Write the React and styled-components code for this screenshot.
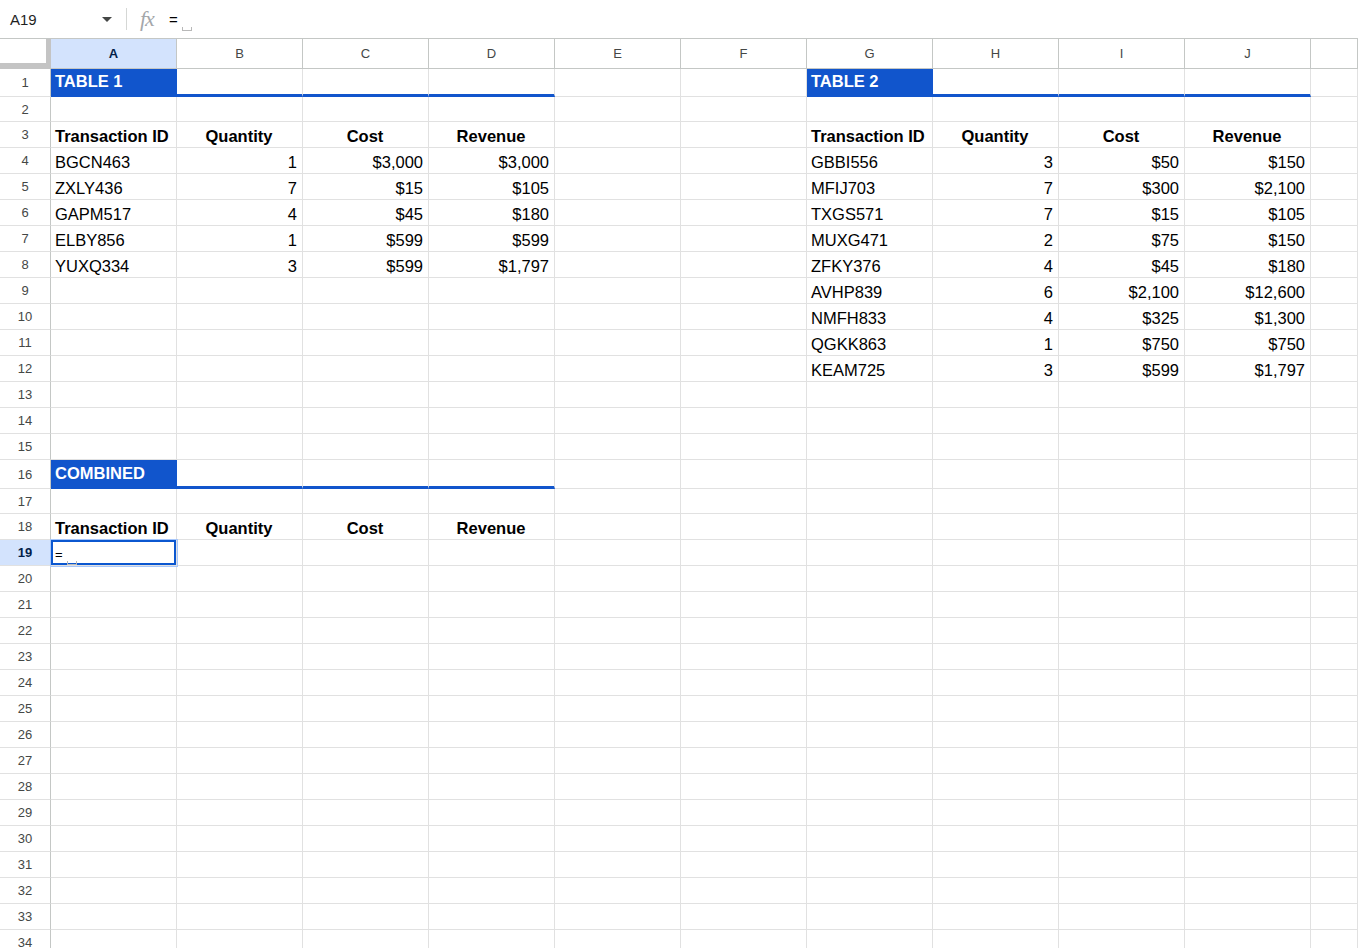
import React from 'react';
import styled, { createGlobalStyle, css } from 'styled-components';

const GlobalStyle = createGlobalStyle`
  html, body {
    margin: 0;
    padding: 0;
    background: #ffffff;
    overflow: hidden;
  }
  body {
    font-family: "Liberation Sans", Arial, sans-serif;
    color: #000;
  }
`;

const BLUE = '#1155cc';
const COLS = ['A', 'B', 'C', 'D', 'E', 'F', 'G', 'H', 'I', 'J'];
const ROW_COUNT = 34;

// Formula bar across the top
const FormulaBar = styled.div`
  display: flex;
  align-items: center;
  height: 38px;
  border-bottom: 1px solid #c4c7c5;
  font-size: 15px;
`;

const NameBox = styled.div`
  display: flex;
  align-items: center;
  justify-content: space-between;
  width: 102px;
  padding: 0 14px 0 10px;
  color: #1f1f1f;
`;

const Caret = styled.span`
  width: 0;
  height: 0;
  border-left: 5px solid transparent;
  border-right: 5px solid transparent;
  border-top: 5px solid #444746;
`;

const Divider = styled.span`
  width: 1px;
  height: 22px;
  background: #d5d7d5;
`;

const Fx = styled.span`
  margin: 0 15px 0 13px;
  font-family: "Liberation Serif", "Times New Roman", serif;
  font-style: italic;
  font-size: 22px;
  color: #a4a7aa;
  letter-spacing: -1px;
`;

const FormulaText = styled.span`
  display: flex;
  align-items: flex-end;
  gap: 4px;
  color: #000;
`;

// Little "space" marker Sheets draws after a trailing blank
const SpaceMark = styled.span`
  display: inline-block;
  width: 8px;
  height: 3px;
  margin-bottom: -3px;
  border: 1px solid #b8b8b8;
  border-top: none;
`;

// Sheet grid
const Sheet = styled.div`
  display: grid;
  grid-template-columns: 51px repeat(10, 126px) 1fr;
  grid-template-rows:
    30px 28px 25px repeat(13, 26px)
    29px 25px repeat(17, 26px);
`;

const Corner = styled.div`
  box-sizing: border-box;
  background: #fff;
  border-right: 5px solid #c4c4c4;
  border-bottom: 6px solid #c4c4c4;
`;

const headActive = css`
  background: #d3e3fd;
  color: #041e49;
  font-weight: bold;
`;

const ColHead = styled.div`
  box-sizing: border-box;
  display: flex;
  align-items: center;
  justify-content: center;
  font-size: 13px;
  color: #444746;
  border-right: 1px solid #c4c7c5;
  border-bottom: 1px solid #c4c7c5;
  background: #fff;
  ${(p) => p.$active && headActive}
`;

const RowHead = styled.div`
  box-sizing: border-box;
  display: flex;
  align-items: center;
  justify-content: center;
  font-size: 13px;
  color: #444746;
  border-right: 1px solid #c4c7c5;
  border-bottom: 1px solid #e1e1e1;
  background: #fff;
  ${(p) => p.$active && headActive}
`;

const Cell = styled.div`
  box-sizing: border-box;
  display: flex;
  align-items: center;
  padding: 3px 5px 0 4px;
  font-size: 16.5px;
  white-space: nowrap;
  border-right: 1px solid #e1e1e1;
  border-bottom: 1px solid #e1e1e1;
  justify-content: ${(p) =>
    p.$align === 'right' ? 'flex-end' : p.$align === 'center' ? 'center' : 'flex-start'};
  font-weight: ${(p) => (p.$bold ? 'bold' : 'normal')};
  ${(p) =>
    p.$title &&
    css`
      background: ${BLUE};
      color: #fff;
      padding-top: 0;
      border-right-color: ${BLUE};
    `}
  ${(p) =>
    p.$underline &&
    css`
      border-bottom: 3px solid ${BLUE};
    `}
  ${(p) =>
    p.$selected &&
    css`
      position: relative;
      z-index: 1;
      font-size: 13px;
      box-shadow: inset 0 0 0 2px #0b57d0, 0 0 0 1px #a8c7fa;
    `}
`;

const CellInner = styled.span`
  display: flex;
  align-items: flex-end;
  gap: 4px;
`;

// ---------- data ----------
const cells = {};
const put = (row, col, v, opts = {}) => {
  cells[`${row}-${col}`] = { v, ...opts };
};

const table = (row, startCol, title, rows) => {
  const c0 = COLS.indexOf(startCol);
  put(row, c0, title, { title: true, bold: true });
  for (let i = 0; i < 4; i++) {
    const prev = cells[`${row}-${c0 + i}`] || {};
    cells[`${row}-${c0 + i}`] = { ...prev, underline: true };
  }
  const heads = ['Transaction ID', 'Quantity', 'Cost', 'Revenue'];
  heads.forEach((h, i) =>
    put(row + 2, c0 + i, h, { bold: true, align: i === 0 ? 'left' : 'center' })
  );
  rows.forEach((r, ri) =>
    r.forEach((v, i) => put(row + 3 + ri, c0 + i, v, { align: i === 0 ? 'left' : 'right' }))
  );
};

table(1, 'A', 'TABLE 1', [
  ['BGCN463', '1', '$3,000', '$3,000'],
  ['ZXLY436', '7', '$15', '$105'],
  ['GAPM517', '4', '$45', '$180'],
  ['ELBY856', '1', '$599', '$599'],
  ['YUXQ334', '3', '$599', '$1,797'],
]);

table(1, 'G', 'TABLE 2', [
  ['GBBI556', '3', '$50', '$150'],
  ['MFIJ703', '7', '$300', '$2,100'],
  ['TXGS571', '7', '$15', '$105'],
  ['MUXG471', '2', '$75', '$150'],
  ['ZFKY376', '4', '$45', '$180'],
  ['AVHP839', '6', '$2,100', '$12,600'],
  ['NMFH833', '4', '$325', '$1,300'],
  ['QGKK863', '1', '$750', '$750'],
  ['KEAM725', '3', '$599', '$1,797'],
]);

table(16, 'A', 'COMBINED', []);

const SELECTED_ROW = 19;

export default function App() {
  const rows = [];
  for (let r = 1; r <= ROW_COUNT; r++) {
    rows.push(
      <RowHead key={`h${r}`} $active={r === SELECTED_ROW}>
        {r}
      </RowHead>
    );
    for (let c = 0; c <= COLS.length; c++) {
      const d = cells[`${r}-${c}`] || {};
      const selected = r === SELECTED_ROW && c === 0;
      rows.push(
        <Cell
          key={`${r}-${c}`}
          $align={d.align}
          $bold={d.bold}
          $title={d.title}
          $underline={d.underline}
          $selected={selected}
        >
          {selected ? (
            <CellInner>
              = <SpaceMark />
            </CellInner>
          ) : (
            d.v
          )}
        </Cell>
      );
    }
  }

  return (
    <>
      <GlobalStyle />
      <FormulaBar>
        <NameBox>
          A19
          <Caret />
        </NameBox>
        <Divider />
        <Fx>fx</Fx>
        <FormulaText>
          = <SpaceMark />
        </FormulaText>
      </FormulaBar>
      <Sheet>
        <Corner />
        {COLS.map((c) => (
          <ColHead key={c} $active={c === 'A'}>
            {c}
          </ColHead>
        ))}
        <ColHead />
        {rows}
      </Sheet>
    </>
  );
}
